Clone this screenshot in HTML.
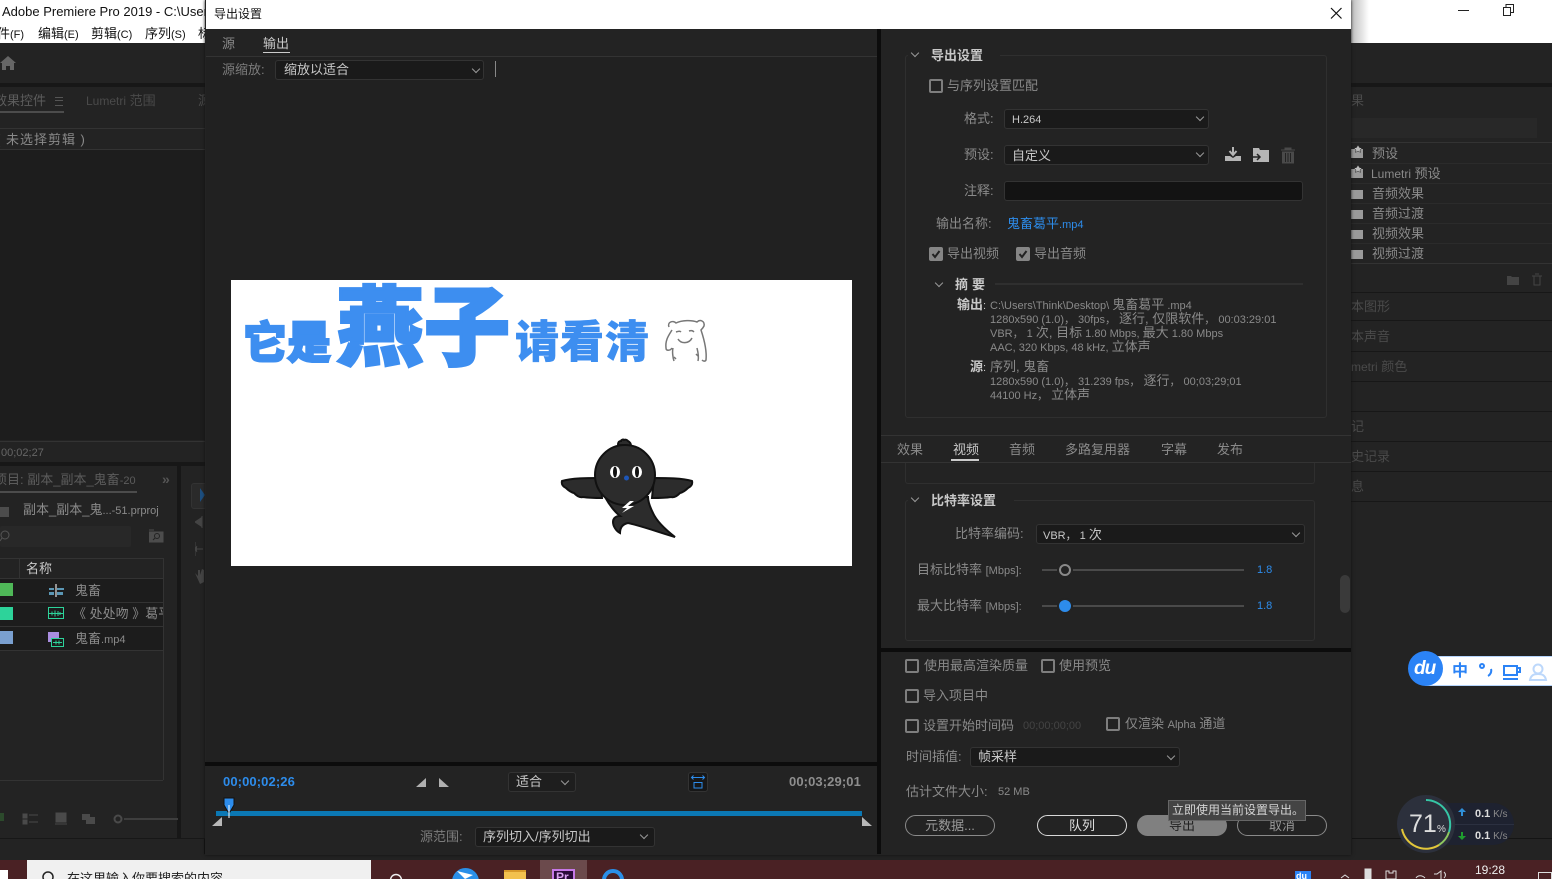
<!DOCTYPE html>
<html lang="zh"><head><meta charset="utf-8"><title>导出设置</title>
<style>
html,body{margin:0;padding:0;background:#232323}
#r{position:relative;width:1552px;height:879px;overflow:hidden;background:#232323;font:13px/16px "Liberation Sans","WenQuanYi Zen Hei","Noto Sans CJK SC",sans-serif;color:#9a9a9a}
#r div,#r svg{position:absolute}
.t{white-space:nowrap;height:16px;margin-top:1px}
.s{font-size:11px}
.d{color:#5c5c5c}.g{color:#8a8a8a}.l{color:#c8c8c8}.w{color:#e4e4e4}.b{color:#2d8ceb}
.h{font-weight:bold;color:#c8c8c8;font-size:13px}
.k{color:#111}
.dd{background:#1a1a1a;border:1px solid #333;border-radius:3px;box-sizing:border-box}
.ch{width:5px;height:5px;border-right:1px solid #999;border-bottom:1px solid #999;transform:rotate(45deg)}
.cb{width:14px;height:14px;box-sizing:border-box;border:2px solid #7e7e7e;border-radius:2px}
.cc{width:14px;height:14px;box-sizing:border-box;background:#858585;border-radius:2px}
.ln{height:1px;background:#333}
.btn{height:21px;width:90px;box-sizing:border-box;border:1px solid #8a8a8a;border-radius:11px;text-align:center;line-height:19px;color:#9a9a9a}
</style></head><body><div id="r">

<!-- background app -->
<div style="left:0;top:0;width:1552px;height:43px;background:#fff"></div>
<div style="left:1351px;top:0;width:18px;height:43px;background:linear-gradient(90deg,#bbb,#fff)"></div>
<div class="t k" style="left:2px;top:3px;width:203px;overflow:hidden">Adobe Premiere Pro 2019 - C:\Users\Think</div>
<div class="t k" style="left:-16px;top:25px">文件<span class="s">(F)</span></div>
<div class="t k" style="left:38px;top:25px">编辑<span class="s">(E)</span></div>
<div class="t k" style="left:91px;top:25px">剪辑<span class="s">(C)</span></div>
<div class="t k" style="left:145px;top:25px">序列<span class="s">(S)</span></div>
<div class="t k" style="left:198px;top:25px;width:7px;overflow:hidden">标记</div>
<svg style="left:1455px;top:2px" width="70" height="14"><path d="M3 8.500H14" stroke="#222"/><path d="M48.500 5.500h7v8h-7zM51 5.500V2.500h7.500v8H55.500" fill="none" stroke="#222"/></svg>
<svg style="left:0;top:54px" width="18" height="18"><path d="M0 9L8 2l8 7h-2v7h-4v-4H6v4H2V9z" fill="#666"/></svg>
<div style="left:0;top:83px;width:205px;height:4px;background:#171717"></div>
<div style="left:1351px;top:83px;width:201px;height:4px;background:#171717"></div>

<div class="t d" style="left:-6px;top:92px">效果控件</div>
<div style="left:55px;top:97px;width:8px;height:7px;border-top:1px solid #555;border-bottom:1px solid #555"></div>
<div style="left:55px;top:100px;width:8px;height:1px;background:#555"></div>
<div class="t" style="left:86px;top:92px;color:#4a4a4a"><span style="font-size:12px">Lumetri</span> 范围</div>
<div class="t" style="left:198px;top:92px;color:#4a4a4a">源</div>
<div style="left:0;top:111px;width:64px;height:2px;background:#4c4c4c"></div>
<div class="ln" style="left:0;top:128px;width:205px"></div>
<div class="ln" style="left:0;top:149px;width:205px"></div>
<div class="t g" style="left:-4px;top:131px;letter-spacing:1px">( 未选择剪辑 )</div>
<div style="left:0;top:150px;width:205px;height:290px;background:#1d1d1d"></div>
<div class="ln" style="left:0;top:441px;width:205px"></div>
<div class="t" style="left:1px;top:444px;color:#666;font-size:11px">00;02;27</div>
<div style="left:0;top:462px;width:205px;height:4px;background:#171717"></div>
<div style="left:177px;top:466px;width:4px;height:372px;background:#171717"></div>

<div class="t d" style="left:-6px;top:471px;width:143px;overflow:hidden">项目: 副本_副本_鬼畜<span class="s">-20</span></div>
<div style="left:0;top:491px;width:137px;height:2px;background:#4c4c4c"></div>
<div class="t" style="left:162px;top:470px;color:#555;font-size:14px;font-weight:bold">»</div>
<div style="left:0;top:507px;width:9px;height:10px;background:#4c4c4c"></div>
<div class="t g" style="left:23px;top:501px">副本_副本_鬼<span class="s">...-51.prproj</span></div>
<div style="left:0;top:526px;width:131px;height:21px;background:#282828;border-radius:2px"></div>
<svg style="left:0;top:529px" width="14" height="14"><circle cx="5" cy="6" r="4" fill="none" stroke="#555"/><path d="M2 9L0 12" stroke="#555"/></svg>
<svg style="left:149px;top:529px" width="15" height="14"><path d="M0 1h5M0 3h14v10H0z" fill="#4c4c4c" stroke="#4c4c4c"/><circle cx="8" cy="7" r="2.500" fill="none" stroke="#232323"/><path d="M6 9l-2 2" stroke="#232323"/></svg>
<div class="ln" style="left:0;top:558px;width:163px"></div>
<div class="ln" style="left:19px;top:558px;width:1px;height:20px"></div>
<div class="t l" style="left:26px;top:560px">名称</div>
<div class="ln" style="left:0;top:578px;width:163px"></div>
<div style="left:0;top:579px;width:163px;height:72px;background:#1c1c1c"></div>
<div class="ln" style="left:0;top:602px;width:163px"></div>
<div class="ln" style="left:0;top:626px;width:163px"></div>
<div class="ln" style="left:0;top:650px;width:163px"></div>
<div style="left:163px;top:558px;width:1px;height:222px;background:#333"></div>
<div class="ln" style="left:0;top:780px;width:163px"></div>
<div style="left:0;top:583px;width:13px;height:13px;background:#4fb858"></div>
<div style="left:0;top:607px;width:13px;height:13px;background:#2dd39a"></div>
<div style="left:0;top:631px;width:13px;height:13px;background:#7aa0d0"></div>
<svg style="left:48px;top:583px" width="17" height="15"><path d="M1 5h5v2H1zM9 5h7v2H9zM1 9h5v3H1zM9 9h6v3H9z" fill="#5b97b5"/><path d="M8 1v13" stroke="#bbb" stroke-width="1.500"/></svg>
<svg style="left:48px;top:607px" width="16" height="13"><rect x=".5" y=".5" width="15" height="11" fill="none" stroke="#2dd39a"/><path d="M.5 6.500h15M4 4.500v4M7 3.500v6M10 4v5M12 5v3" stroke="#2dd39a"/></svg>
<svg style="left:48px;top:632px" width="16" height="15"><rect x="0" y="0" width="11" height="10" fill="#a98de0"/><rect x="3.500" y="6.500" width="12" height="8" fill="#1c1c1c" stroke="#2dd39a"/><path d="M5 10.500h9M8 8.500v4M11 8.500v4" stroke="#2dd39a"/></svg>
<div class="t g" style="left:75px;top:582px">鬼畜</div>
<div class="t g" style="left:73px;top:605px;width:90px;overflow:hidden">《 处处吻 》葛平</div>
<div class="t g" style="left:75px;top:630px">鬼畜<span class="s">.mp4</span></div>
<svg style="left:0;top:808px" width="178" height="20"><path d="M0 5h4v8H0z" fill="#2c4a2c"/><path d="M23 6h4v4h-4zM23 12h4v4h-4zM29 7h9M29 14h9" stroke="#4a4a4a" fill="#4a4a4a"/><path d="M56 5h10v9H56zM55 16h12" stroke="#4a4a4a" fill="#4a4a4a"/><path d="M82 6h8v6h-8zM86 9h9v7h-9z" fill="#4a4a4a"/><circle cx="118" cy="11" r="3.500" fill="none" stroke="#4a4a4a" stroke-width="2"/><path d="M124 11h54" stroke="#3e3e3e" stroke-width="2"/></svg>
<div style="left:0;top:838px;width:205px;height:1px;background:#171717"></div>
<div style="left:191px;top:483px;width:14px;height:24px;background:#2a2a2a;border:1px solid #333;border-radius:3px 0 0 3px"></div>
<div style="left:200px;top:488px;width:0;height:0;border-left:5px solid #1d4f80;border-top:7px solid transparent;border-bottom:7px solid transparent"></div>
<svg style="left:195px;top:515px" width="10" height="75"><path d="M0 7l6-4v8zM7 1v12M0 34h8M2 31l-2 3 2 3M0 27v14" stroke="#444" fill="#444"/><path d="M0 58l3 3v-6l2 0v5l2-6 2 1v12l-4 2z" fill="#444"/></svg>

<!-- right bg panel -->
<div class="t" style="left:1351px;top:92px;color:#4a4a4a">果</div>
<div style="left:1351px;top:118px;width:186px;height:20px;background:#282828"></div>
<div class="ln" style="left:1351px;top:142px;width:201px"></div>
<div class="ln" style="left:1351px;top:163px;width:201px;background:#2b2b2b"></div>
<div class="ln" style="left:1351px;top:183px;width:201px;background:#2b2b2b"></div>
<div class="ln" style="left:1351px;top:203px;width:201px;background:#2b2b2b"></div>
<div class="ln" style="left:1351px;top:223px;width:201px;background:#2b2b2b"></div>
<div class="ln" style="left:1351px;top:243px;width:201px;background:#2b2b2b"></div>
<div class="ln" style="left:1351px;top:263px;width:201px"></div>
<svg style="left:1351px;top:145px" width="14" height="120"><path d="M0 4h12v9H0zM0 24h12v9H0zM0 45h12v9H0zM0 65h12v9H0zM0 85h12v9H0zM0 105h12v9H0z" fill="#9a9a9a"/><path d="M7 0l1.500 2.500L11 3 9 5l.5 2.500L7 6 4.500 7.500 5 5 3 3l2.500-.5zM7 20l1.500 2.500L11 23 9 25l.5 2.500L7 26l-2.500 1.500L5 25l-2-2 2.500-.5z" fill="#bbb" stroke="#232323" stroke-width=".5"/></svg>
<div class="t g" style="left:1372px;top:145px">预设</div>
<div class="t g" style="left:1371px;top:165px"><span style="font-size:12px">Lumetri</span> 预设</div>
<div class="t g" style="left:1372px;top:185px">音频效果</div>
<div class="t g" style="left:1372px;top:205px">音频过渡</div>
<div class="t g" style="left:1372px;top:225px">视频效果</div>
<div class="t g" style="left:1372px;top:245px">视频过渡</div>
<svg style="left:1505px;top:273px" width="40" height="14"><path d="M2 3h4l1 1h7v8H2z" fill="#444"/><path d="M27 3h10M29 3v9h6V3M30 1h4" stroke="#444" fill="none"/></svg>
<div class="ln" style="left:1351px;top:292px;width:201px;background:#171717"></div>
<div class="ln" style="left:1351px;top:320px;width:201px;background:#171717"></div>
<div class="ln" style="left:1351px;top:351px;width:201px;background:#171717"></div>
<div class="ln" style="left:1351px;top:381px;width:201px;background:#171717"></div>
<div class="ln" style="left:1351px;top:411px;width:201px;background:#171717"></div>
<div class="ln" style="left:1351px;top:441px;width:201px;background:#171717"></div>
<div class="ln" style="left:1351px;top:471px;width:201px;background:#171717"></div>
<div class="ln" style="left:1351px;top:501px;width:201px;background:#171717"></div>
<div class="t" style="left:1351px;top:298px;color:#4a4a4a">本图形</div>
<div class="t" style="left:1351px;top:328px;color:#4a4a4a">本声音</div>
<div class="t" style="left:1351px;top:358px;color:#4a4a4a"><span style="font-size:12px">metri</span> 颜色</div>
<div class="t" style="left:1351px;top:418px;color:#4a4a4a">记</div>
<div class="t" style="left:1351px;top:448px;color:#4a4a4a">史记录</div>
<div class="t" style="left:1351px;top:478px;color:#4a4a4a">息</div>
<div style="left:1352px;top:838px;width:200px;height:1px;background:#141414"></div>

<!-- dialog -->
<div style="left:205px;top:0;width:1146px;height:855px;background:#232323;box-shadow:0 0 3px #111"></div>
<div style="left:206px;top:0;width:1145px;height:29px;background:#fff"></div>
<div class="t k" style="left:214px;top:5px;font-size:12px">导出设置</div>
<svg style="left:1329px;top:6px" width="14" height="14"><path d="M2 2L12.500 12.500M12.500 2L2 12.500" stroke="#111" stroke-width="1.200"/></svg>

<!-- left dialog -->
<div style="left:206px;top:57px;width:671px;height:705px;background:#212121"></div>
<div style="left:206px;top:29px;width:671px;height:28px;background:#232323"></div>
<div class="ln" style="left:206px;top:56px;width:671px"></div>
<div class="t g" style="left:222px;top:35px">源</div>
<div class="t l" style="left:263px;top:35px">输出</div>
<div style="left:263px;top:52px;width:27px;height:1px;background:#ccc"></div>
<div class="t" style="left:222px;top:61px;color:#7c7c7c">源缩放:</div>
<div class="dd" style="left:275px;top:60px;width:209px;height:20px"></div>
<div class="t l" style="left:284px;top:61px">缩放以适合</div>
<div class="ch" style="left:473px;top:66px"></div>
<div style="left:495px;top:61px;width:1px;height:16px;background:#888"></div>

<!-- preview -->
<div style="left:231px;top:280px;width:621px;height:286px;background:#fff;overflow:hidden">
  <div class="t" style="left:12px;top:29px;height:58px;font:900 44px/58px 'Noto Sans CJK SC',sans-serif;color:#3d8ef0;-webkit-text-stroke:2px #3d8ef0">它是</div>
  <div class="t" style="left:106px;top:-20px;height:120px;font:900 86px/120px 'Noto Sans CJK SC',sans-serif;color:#3d8ef0;-webkit-text-stroke:3px #3d8ef0;letter-spacing:1px">燕子</div>
  <div class="t" style="left:284px;top:28px;height:58px;font:900 44px/58px 'Noto Sans CJK SC',sans-serif;color:#3d8ef0;-webkit-text-stroke:.5px #3d8ef0;letter-spacing:1px">请看清</div>
  <svg style="left:432px;top:38px" width="48" height="46" fill="none" stroke="#777" stroke-width="1.500"><path d="M6 9C4 4 10 2 13 5c6-3 16-3 21-1 3-3 8-1 7 4-1 2-2 3-3 4 3 9 6 20 5 30-1 2-3 1-4 0M9 12C6 17 2 22 3 30c0 3 4 3 6 0M10 30c-1 4 0 10 1 13M34 30c1 4 2 9 1 13"/><path d="M13 14c3-1 4-1 5 0M26 13c3-1 4 0 5 1M15 21c3 5 11 5 14-1M11 39l2 2M33 36l2 2"/></svg>
  <svg style="left:327px;top:155px" width="137" height="105" viewBox="0 0 137 105">
    <path d="M4 46c10-3 25-3 38-3l2 20c-7 0-12 0-19-1-4 1-7-2-9-4-4-1-6-3-8-5-2-1-5-3-4-7zM134 46c-10-3-26-3-38-3l-2 20c8 0 13 0 19-1 4 1 7-2 9-4 4-1 6-3 8-5 2-1 5-3 4-7z" fill="#2c2c2c" stroke="#111" stroke-width="2"/>
    <path d="M47 62c5 9 10 15 15 19-5 0-7 3-7 6 0 4 3 9 7 11 0-6 3-9 8-10 14 3 30 9 47 14-9-7-18-15-22-24-3-6-5-11-5-16z" fill="#2c2c2c" stroke="#111" stroke-width="2"/>
    <path d="M60 10c0-3 1-4 3-4 0-1 2-2 3-1 2-1 3 0 4 1 2 1 3 3 3 5z" fill="#2c2c2c" stroke="#111" stroke-width="2"/>
    <circle cx="67" cy="40" r="30" fill="#2c2c2c" stroke="#111" stroke-width="2"/>
    <ellipse cx="57" cy="37" rx="5" ry="6" fill="#fff"/><ellipse cx="57" cy="37" rx="2" ry="5.500" fill="#111"/>
    <ellipse cx="79" cy="37" rx="5" ry="6" fill="#fff"/><ellipse cx="79" cy="37" rx="2" ry="5.500" fill="#111"/>
    <circle cx="68.500" cy="43" r="2.500" fill="#1d56b8"/>
    <path d="M72 66l-8 7h5l-5 5 12-7h-6l6-5z" fill="#fff"/>
  </svg>
</div>

<!-- timeline -->
<div style="left:205px;top:762px;width:672px;height:4px;background:#0c0c0c"></div>
<div class="t b" style="left:223px;top:773px;font-weight:bold;letter-spacing:.1px">00;00;02;26</div>
<svg style="left:414px;top:775px" width="38" height="14"><path d="M2 12L12 3v9zM25 3l10 9H25z" fill="#b0b0b0"/></svg>
<div class="dd" style="left:508px;top:772px;width:68px;height:20px;background:#1e1e1e"></div>
<div class="t l" style="left:516px;top:773px">适合</div>
<div class="ch" style="left:562px;top:778px"></div>
<div class="dd" style="left:688px;top:772px;width:20px;height:20px;background:#171717"></div>
<svg style="left:690px;top:774px" width="16" height="16" fill="none" stroke="#2d8ceb"><path d="M2 3.500h12M3.500 1.500l-2 2 2 2M12.500 1.500l2 2-2 2" /><rect x="4" y="8.500" width="8" height="5.500"/></svg>
<div class="t" style="left:789px;top:773px;color:#8e8e8e;font-weight:bold;letter-spacing:.1px">00;03;29;01</div>
<div style="left:216px;top:811px;width:646px;height:5px;background:#0b78b4"></div>
<svg style="left:222px;top:796px" width="14" height="22"><path d="M2 2h10v7l-4 7H6L2 9z" fill="#2d8ceb" stroke="#111"/><path d="M7 9v13" stroke="#fff"/></svg>
<svg style="left:211px;top:816px" width="12" height="11"><path d="M1 10L11 1v9z" fill="#b8b8b8"/></svg>
<svg style="left:861px;top:816px" width="12" height="11"><path d="M1 1l10 9H1z" fill="#b8b8b8"/></svg>
<div class="t" style="left:420px;top:828px;color:#7c7c7c">源范围:</div>
<div class="dd" style="left:475px;top:827px;width:180px;height:20px"></div>
<div class="t l" style="left:483px;top:828px">序列切入/序列切出</div>
<div class="ch" style="left:641px;top:832px"></div>
<div style="left:204px;top:839px;width:1px;height:15px;background:#111"></div>

<!-- dividers -->
<div style="left:877px;top:29px;width:4px;height:825px;background:#0c0c0c"></div>
<div style="left:881px;top:648px;width:470px;height:4px;background:#0c0c0c"></div>

<!-- right dialog -->
<div style="left:905px;top:55px;width:422px;height:363px;box-sizing:border-box;border:1px solid #2f2f2f;border-radius:3px"></div>
<div style="left:908px;top:48px;width:92px;height:14px;background:#232323"></div>
<div class="ch" style="left:912px;top:50px"></div>
<div class="t h" style="left:931px;top:47px">导出设置</div>
<div class="cb" style="left:929px;top:79px"></div>
<div class="t g" style="left:947px;top:77px">与序列设置匹配</div>
<div class="t g" style="left:964px;top:110px">格式:</div>
<div class="dd" style="left:1004px;top:109px;width:205px;height:20px"></div>
<div class="t l s" style="left:1012px;top:111px">H.264</div>
<div class="ch" style="left:1197px;top:114px"></div>
<div class="t g" style="left:964px;top:146px">预设:</div>
<div class="dd" style="left:1004px;top:145px;width:205px;height:20px"></div>
<div class="t l" style="left:1012px;top:147px">自定义</div>
<div class="ch" style="left:1197px;top:150px"></div>
<svg style="left:1224px;top:146px" width="74" height="18"><path d="M9 1v7M5.500 5L9 9l3.500-4" stroke="#b5b5b5" stroke-width="2" fill="none"/><path d="M1 10h5l3 2 3-2h5v5H1z" fill="#b5b5b5"/><path d="M29 2h6l1 2h9v12H29z" fill="#b5b5b5"/><path d="M29 11h7M33 8l3 3-3 3" stroke="#232323" stroke-width="1.500" fill="none"/><path d="M57 4h14M61 4V2h6v2M58.500 6h11v11h-11z" fill="#4a4a4a" stroke="#4a4a4a"/><path d="M61.500 7v9M64 7v9M66.500 7v9" stroke="#232323"/></svg>
<div class="t g" style="left:964px;top:182px">注释:</div>
<div class="dd" style="left:1004px;top:181px;width:299px;height:20px;background:#131313"></div>
<div class="t g" style="left:936px;top:215px">输出名称:</div>
<div class="t b" style="left:1007px;top:215px">鬼畜葛平<span class="s">.mp4</span></div>
<div class="cc" style="left:929px;top:247px"></div>
<svg style="left:929px;top:247px" width="14" height="14"><path d="M3.500 7l2.500 3 4.500-6" stroke="#222" stroke-width="2" fill="none"/></svg>
<div class="t g" style="left:947px;top:245px">导出视频</div>
<div class="cc" style="left:1016px;top:247px"></div>
<svg style="left:1016px;top:247px" width="14" height="14"><path d="M3.500 7l2.500 3 4.500-6" stroke="#222" stroke-width="2" fill="none"/></svg>
<div class="t g" style="left:1034px;top:245px">导出音频</div>
<div class="ch" style="left:936px;top:280px"></div>
<div class="t h" style="left:955px;top:276px;letter-spacing:4px">摘要</div>
<div style="left:995px;top:283px;width:308px;height:2px;background:#2f2f2f"></div>
<div class="t h" style="left:957px;top:296px">输出<span style="font-weight:normal;font-size:11px">:</span></div>
<div class="t g s" style="left:990px;top:296px">C:\Users\Think\Desktop\ <span style="font-size:13px">鬼畜葛平</span> .mp4</div>
<div class="t g s" style="left:990px;top:310px">1280x590 (1.0)， 30fps， <span style="font-size:13px">逐行, 仅限软件</span>， 00:03:29:01</div>
<div class="t g s" style="left:990px;top:324px">VBR， 1 <span style="font-size:13px">次, 目标</span> 1.80 Mbps, <span style="font-size:13px">最大</span> 1.80 Mbps</div>
<div class="t g s" style="left:990px;top:338px">AAC, 320 Kbps, 48 kHz, <span style="font-size:13px">立体声</span></div>
<div class="t h" style="left:970px;top:358px">源<span style="font-weight:normal;font-size:11px">:</span></div>
<div class="t g" style="left:990px;top:358px">序列, 鬼畜</div>
<div class="t g s" style="left:990px;top:372px">1280x590 (1.0)， 31.239 fps， <span style="font-size:13px">逐行</span>， 00;03;29;01</div>
<div class="t g s" style="left:990px;top:386px">44100 Hz， <span style="font-size:13px">立体声</span></div>

<div class="ln" style="left:881px;top:435px;width:470px"></div>
<div class="ln" style="left:881px;top:462px;width:470px"></div>
<div class="t g" style="left:897px;top:441px">效果</div>
<div class="t l" style="left:953px;top:441px">视频</div>
<div style="left:951px;top:459px;width:28px;height:2px;background:#ccc"></div>
<div class="t g" style="left:1009px;top:441px">音频</div>
<div class="t g" style="left:1065px;top:441px">多路复用器</div>
<div class="t g" style="left:1161px;top:441px">字幕</div>
<div class="t g" style="left:1217px;top:441px">发布</div>

<div style="left:905px;top:463px;width:410px;height:21px;box-sizing:border-box;border:1px solid #2f2f2f;border-top:0;border-radius:0 0 3px 3px"></div>
<div style="left:905px;top:500px;width:410px;height:141px;box-sizing:border-box;border:1px solid #2f2f2f;border-radius:3px"></div>
<div style="left:908px;top:493px;width:106px;height:14px;background:#232323"></div>
<div class="ch" style="left:912px;top:495px"></div>
<div class="t h" style="left:931px;top:492px">比特率设置</div>
<div class="t g" style="left:955px;top:525px">比特率编码:</div>
<div class="dd" style="left:1036px;top:524px;width:269px;height:20px"></div>
<div class="t l s" style="left:1043px;top:526px">VBR， 1 <span style="font-size:13px">次</span></div>
<div class="ch" style="left:1293px;top:530px"></div>
<div class="t g" style="left:917px;top:561px">目标比特率 <span class="s">[Mbps]:</span></div>
<div style="left:1042px;top:569px;width:202px;height:2px;background:#4a4a4a"></div>
<div style="left:1057px;top:562px;width:16px;height:16px;background:#232323;border-radius:50%"></div>
<div style="left:1059px;top:564px;width:12px;height:12px;box-sizing:border-box;border:2px solid #8a8a8a;border-radius:50%"></div>
<div class="t b s" style="left:1257px;top:561px">1.8</div>
<div class="t g" style="left:917px;top:597px">最大比特率 <span class="s">[Mbps]:</span></div>
<div style="left:1042px;top:605px;width:202px;height:2px;background:#4a4a4a"></div>
<div style="left:1057px;top:598px;width:16px;height:16px;background:#232323;border-radius:50%"></div>
<div style="left:1059px;top:600px;width:12px;height:12px;background:#2d8ceb;border-radius:50%"></div>
<div class="t b s" style="left:1257px;top:597px">1.8</div>
<div style="left:1340px;top:575px;width:10px;height:38px;background:#3a3a3a;border-radius:5px"></div>

<div class="cb" style="left:905px;top:659px"></div>
<div class="t g" style="left:924px;top:657px">使用最高渲染质量</div>
<div class="cb" style="left:1041px;top:659px"></div>
<div class="t g" style="left:1059px;top:657px">使用预览</div>
<div class="cb" style="left:905px;top:689px"></div>
<div class="t g" style="left:923px;top:687px">导入项目中</div>
<div class="cb" style="left:905px;top:719px"></div>
<div class="t g" style="left:923px;top:717px">设置开始时间码</div>
<div class="t s" style="left:1023px;top:717px;color:#444">00;00;00;00</div>
<div class="cb" style="left:1106px;top:717px"></div>
<div class="t g" style="left:1125px;top:715px">仅渲染 <span class="s">Alpha</span> 通道</div>
<div class="t g" style="left:906px;top:748px">时间插值:</div>
<div class="dd" style="left:970px;top:747px;width:210px;height:20px"></div>
<div class="t l" style="left:978px;top:748px">帧采样</div>
<div class="ch" style="left:1168px;top:753px"></div>
<div class="t g" style="left:906px;top:783px">估计文件大小:</div>
<div class="t g s" style="left:998px;top:783px">52 MB</div>
<div class="btn" style="left:905px;top:815px">元数据...</div>
<div class="btn" style="left:1037px;top:815px;border-color:#d8d8d8;color:#e0e0e0">队列</div>
<div class="btn" style="left:1137px;top:815px;background:#808080;border-color:#808080;color:#222">导出</div>
<div class="btn" style="left:1237px;top:815px">取消</div>
<div class="t" style="left:1168px;top:799px;width:138px;height:21px;box-sizing:border-box;background:#444;border:1px solid #666;color:#d4d4d4;line-height:19px;padding-left:3px;font-size:12px">立即使用当前设置导出。</div>

<!-- IME -->
<div style="left:1425px;top:656px;width:127px;height:30px;background:#fff;border:1px solid #b5d4fb;border-right:0;box-sizing:border-box"></div>
<div style="left:1408px;top:651px;width:35px;height:35px;border-radius:50%;background:#2b83f6"></div>
<div class="t" style="left:1414px;top:660px;color:#fff;font:italic bold 19px/16px 'Liberation Sans',sans-serif;letter-spacing:-1px">du</div>
<div class="t" style="left:1452px;top:663px;color:#2b83f6;font-size:16px;font-weight:bold">中</div>
<svg style="left:1478px;top:662px" width="70" height="20" fill="none" stroke="#2b83f6" stroke-width="2"><circle cx="4" cy="4" r="2"/><path d="M13 7c1 3-1 6-3 7" /><path d="M26 4h13v9H26zM39 6h3v4h-3M25 17h15"/><circle cx="60" cy="7" r="4.500" stroke="#bdd8fb"/><path d="M52 18c1-5 4-6 8-6s7 1 8 6z" stroke="#bdd8fb"/></svg>

<!-- speed widget -->
<div style="left:1426px;top:803px;width:88px;height:42px;border-radius:21px;background:#1e2230"></div>
<div style="left:1452px;top:824px;width:62px;height:1px;background:#2b3040"></div>
<div style="left:1397px;top:795px;width:58px;height:58px;border-radius:50%;background:#2c303c"></div>
<svg style="left:1397px;top:795px" width="58" height="58" fill="none" stroke-width="2"><path d="M29 5A24.500 24.500 0 0 1 52 37" stroke="#36c6a6"/><path d="M52 37A24.500 24.500 0 0 1 42 50" stroke="#8fc860"/><path d="M42 50A24.500 24.500 0 0 1 5 34" stroke="#e2c63a"/></svg>
<div class="t" style="left:1409px;top:811px;height:24px;color:#ddd;font-size:25px;line-height:24px">71</div>
<div class="t" style="left:1437px;top:821px;color:#ddd;font-size:10px">%</div>
<svg style="left:1456px;top:806px" width="12" height="36"><path d="M6 2l4 4H7v4H5V6H2z" fill="#2f8fd8"/><path d="M6 34l4-4H7v-4H5v4H2z" fill="#1f9d2f"/></svg>
<div class="t" style="left:1475px;top:805px;color:#ddd;font-size:11px;font-weight:bold">0.1<span style="color:#888;font-weight:normal;font-size:10px"> K/s</span></div>
<div class="t" style="left:1475px;top:827px;color:#ddd;font-size:11px;font-weight:bold">0.1<span style="color:#888;font-weight:normal;font-size:10px"> K/s</span></div>

<!-- taskbar -->
<div style="left:0;top:860px;width:1552px;height:19px;background:#4a2124;overflow:hidden">
  <div style="left:0;top:10px;width:8px;height:9px;background:#fff"></div>
  <div style="left:27px;top:0;width:344px;height:19px;background:#f0f0f0"></div>
  <svg style="left:40px;top:11px" width="16" height="8"><circle cx="8" cy="6" r="5" fill="none" stroke="#222" stroke-width="1.500"/></svg>
  <div class="t" style="left:67px;top:10px;color:#222">在这里输入你要搜索的内容</div>
  <svg style="left:388px;top:13px" width="16" height="6"><circle cx="8" cy="7" r="5.500" fill="none" stroke="#eee" stroke-width="1.500"/></svg>
  <div style="left:452px;top:8px;width:27px;height:27px;border-radius:50%;background:#2a8fe8"></div>
  <svg style="left:456px;top:10px" width="18" height="9"><path d="M1 1l16 4-8 4z" fill="#fff"/></svg>
  <div style="left:504px;top:10px;width:22px;height:9px;background:#f2c14e;border-top:2px solid #d89a2a;box-sizing:border-box"></div>
  <div style="left:540px;top:0;width:47px;height:19px;background:#6b4a4c"></div>
  <div style="left:552px;top:9px;width:23px;height:16px;background:#2a0a3a;border:2px solid #c678e8;box-sizing:border-box"></div>
  <div class="t" style="left:556px;top:8px;color:#d9a0f0;font-size:12px;font-weight:bold">Pr</div>
  <div style="left:602px;top:9px;width:22px;height:22px;box-sizing:border-box;border:4px solid #2a8fe8;border-radius:50%"></div>
  <div style="left:1295px;top:11px;width:16px;height:8px;background:#2b83f6"></div>
  <div class="t" style="left:1296px;top:7px;color:#fff;font-size:9px;font-weight:bold">du</div>
  <svg style="left:1340px;top:8px" width="115" height="11" fill="none" stroke="#ddd"><path d="M1 10l4-3 4 3"/><rect x="25" y="1" width="6" height="10" fill="#ddd"/><path d="M46 3h3v2h4V3h3v8H46z"/><path d="M76 10c2-3 6-3 9 0"/><path d="M94 6h3l4-3v8M104 4c2 2 2 4 0 6"/></svg>
  <div class="t" style="left:1475px;top:1px;color:#eee;font-size:12px">19:28</div>
  <div style="left:1538px;top:12px;width:14px;height:8px;border:1px solid #ddd;box-sizing:border-box"></div>
</div>

</div></body></html>
